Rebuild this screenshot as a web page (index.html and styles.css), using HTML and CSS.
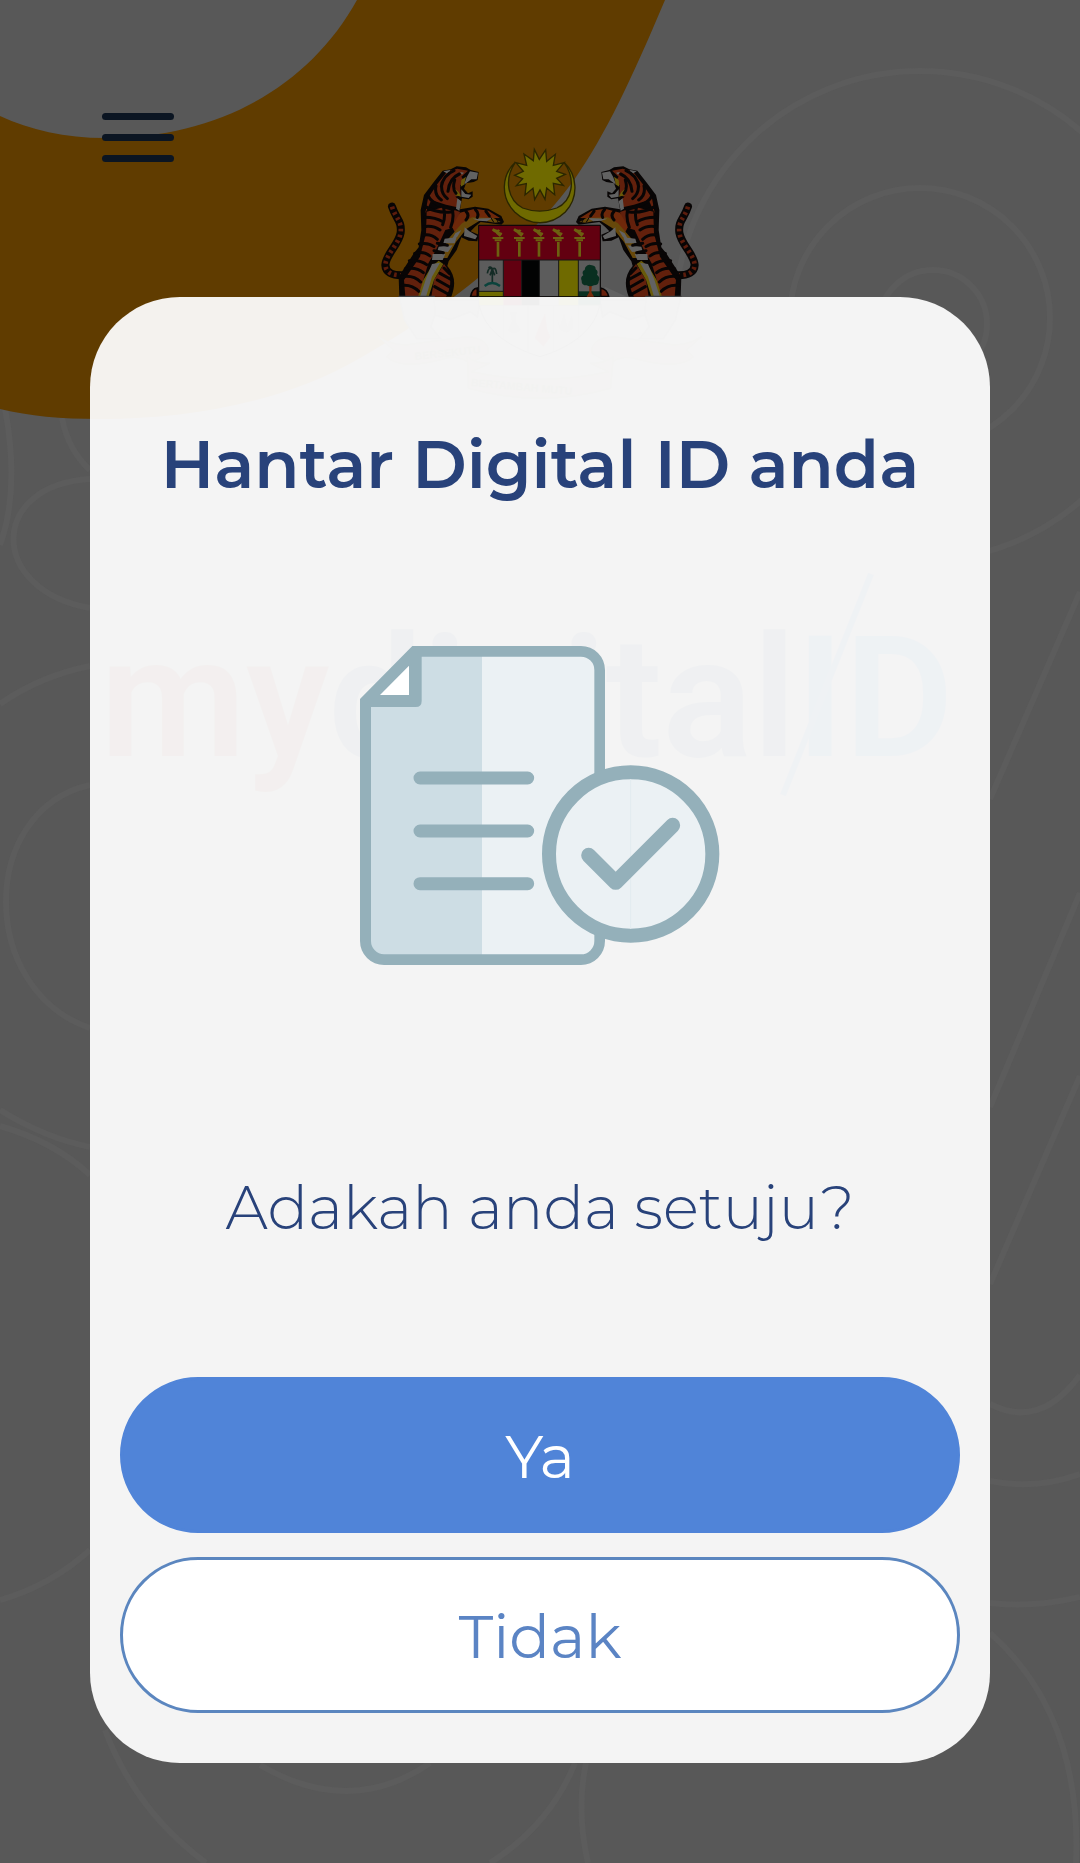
FILE: index.html
```html
<!DOCTYPE html>
<html lang="ms">
<head>
<meta charset="utf-8">
<meta name="viewport" content="width=device-width, initial-scale=1">
<title>MyDigital ID</title>
<link rel="stylesheet" href="styles.css">
</head>
<body>
<div class="scene">
  <svg class="pattern" viewBox="0 0 1080 1863" preserveAspectRatio="xMidYMin slice" aria-hidden="true">
    <g class="rings">
      <circle cx="920" cy="316" r="245"/>
      <circle cx="920" cy="318" r="130"/>
      <circle cx="933" cy="324" r="54"/>
      <path d="M990 799L1080 592M990 1107L1080 893M990 1284L1080 1076"/>
      <path d="M990 1404Q1040 1430 1080 1375M990 1481Q1035 1490 1080 1474M990 1603Q1035 1608 1080 1597M990 1633Q1082 1715 1076 1863"/>
      <path d="M5 408Q20 490 0 545M62 418Q68 450 90 470M90 479C-12 485 -12 590 90 608M0 704Q40 676 90 666M90 785C-22 810 -22 990 90 1028M0 1110Q45 1138 90 1147M0 1126Q55 1142 90 1175M0 1600Q50 1586 90 1550"/>
      <path d="M105 1730Q135 1810 206 1863M260 1765Q350 1818 430 1763M575 1763Q550 1825 490 1863M586 1763Q576 1810 588 1863"/>
    </g>
    <path class="swoosh" d="M357 0C310 85 220 138 105 138C65 138 30 130 0 116V409C30 416 60 419 100 419C190 419 285 402 360 358C430 318 520 255 574 180C606 134 632 78 665 0Z"/>
  </svg>

  <div class="page">
    <header class="topbar">
      <button class="menu" type="button" aria-label="Menu"><span></span><span></span><span></span></button>
      <svg class="crest" viewBox="0 0 1080 840" role="img" aria-label="Jata Negara">
        <defs>
          <g id="tiger">
            <path d="M96 230C108 268 126 272 122 308C116 345 78 372 76 405C77 426 95 437 128 436" fill="none" stroke="#080505" stroke-width="24" stroke-linecap="round"/>
            <path d="M96 230C108 268 126 272 122 308C116 345 78 372 76 405C77 426 95 437 128 436" fill="none" stroke="#5c1c0c" stroke-width="14" stroke-dasharray="8 10"/>
            <path d="M248 122L272 118L290 109L318 112L332 120L356 126L353 150L341 156L318 160L312 176L324 190L338 184L338 200L326 208L306 205L300 238L345 230L385 236L424 258L432 276L424 284L362 276L345 290L332 304L356 314L352 334L326 332L304 322L290 360L266 394L262 408C285 435 288 462 274 500L118 500L116 440L160 372L176 352L184 300L182 240L192 195L222 155Z" fill="#080505"/>
            <path d="M262 124L292 116L324 122L304 140L316 158L300 166L302 196L286 200L302 214L292 232L258 224L214 210L196 250L204 205L232 162Z" fill="#62200c"/>
            <path d="M200 245L255 230L300 246L290 290L256 300L228 360L205 400L190 450L185 500L136 500L132 450L180 380L198 310Z" fill="#62200c"/>
            <path d="M300 248L345 236L385 242L420 264L350 266L312 290L284 306L276 290Z" fill="#6e280a"/>
            <path d="M252 402C276 430 276 470 258 500L214 500L222 450Z" fill="#62200c"/>
            <path d="M306 280L336 262L400 264L422 276L404 278L362 270L320 296L288 336L262 384L240 384L262 330Z" fill="#67480a"/>
            <path d="M214 410L236 392L250 402L222 450L206 500L174 500L190 450Z" fill="#695a0a"/>
            <path d="M338 266L398 264L380 274L356 272ZM314 292L328 304L352 318L346 328L312 318ZM286 310L304 300L292 320L276 328ZM254 326L290 322L284 340L250 340ZM236 350L278 346L264 366L232 364ZM218 372L256 372L248 390L216 390ZM216 402L240 398L216 440L198 500L180 500L198 446Z" fill="#626262"/>
            <path d="M250 124L270 120L268 134ZM330 124L354 128L350 148L334 148L312 164L320 142ZM300 126L312 128L306 134ZM304 178L316 192L334 194L326 204L304 200ZM292 205L304 214L298 242L288 236Z" fill="#626262"/>
            <path d="M278 170L296 186L304 200L286 196ZM304 150L318 140L312 164L302 170Z" fill="#695a0a"/>
            <path d="M282 122Q250 135 244 170M298 132Q268 145 264 184M228 168Q222 195 244 210M246 158Q240 188 262 206M284 150Q276 176 288 190M206 200Q220 226 280 238M196 230Q230 250 272 246M194 262Q226 262 250 276M192 290Q220 286 240 300M188 316Q212 310 232 328M178 342Q204 336 222 350M164 370Q192 362 210 378M148 392Q180 388 200 404M136 416Q170 410 190 428M126 440Q160 434 182 456M124 466Q156 462 176 484M250 230Q258 260 248 284M276 236Q284 262 272 292M318 244Q330 256 318 270M346 238Q358 250 352 262M378 244L388 258M252 414L268 430M240 430L276 450M232 450L274 474M224 470L264 492M232 340L262 346M222 362L250 368" fill="none" stroke="#080505" stroke-width="9" stroke-linecap="round"/>
            <path d="M392 262L402 278M408 264L416 280" stroke="#080505" stroke-width="3"/>
            <path d="M118 500L134 570L170 625H240L212 590L226 550L222 500ZM222 510L226 555L272 568L330 545L352 560L360 510Z" fill="#555" stroke="#3e3e3e" stroke-width="5"/>
          </g>
          <g id="torch" fill="none" stroke="#6c6010">
            <path d="M0 336V380" stroke-width="8"/>
            <path d="M-16 324H16M-10 331H10" stroke-width="6"/>
            <path d="M8 318Q0 312 -4 308M12 312Q-8 306 -16 298Q-2 306 4 300" stroke-width="7"/>
          </g>
        </defs>
        <path d="M330 500L352 470L362 500ZM720 500L735 470L800 500Z" fill="#626262"/>
        <use href="#tiger"/>
        <use href="#tiger" transform="matrix(-1 0 0 1 1080 0)"/>
        <path d="M332 500Q336 476 352 474V500ZM722 474Q742 478 746 500H722Z" fill="#68200c" stroke="#080505" stroke-width="5"/>
        <path d="M466 97C425 135 420 200 464 246C510 290 572 288 616 246C658 200 652 135 612 97C650 150 636 215 590 234C558 246 520 246 488 234C444 210 430 150 466 97Z" fill="#6f6a00" stroke="#2b2600" stroke-width="4"/>
        <path class="star" d="M523 58L538 88L557 60L560 94L586 73L580 106L612 98L590 124L616 133L590 145L610 166L580 160L584 194L560 174L555 208L540 180L524 209L519 175L495 195L499 161L469 167L488 146L464 136L490 124L468 98L500 106L492 72L520 92Z"/>
        <path d="M356 286H721V500C721 590 640 650 540 680C440 650 356 590 356 500Z" fill="#5c5c5c" stroke="#333" stroke-width="3"/>
        <path d="M356 286H721V390H356Z" fill="#620010"/>
        <path d="M430 390H485V526H430Z" fill="#620010"/>
        <path d="M485 390H538V526H485Z" fill="#020303"/>
        <path d="M596 390H655V526H596Z" fill="#6f6a00"/>
        <path d="M356 484H430V526H358Z" fill="#6f6a00"/>
        <path d="M655 484H721V526H655Z" fill="#092f20"/>
        <path d="M356 390H721M430 390V500M485 390V500M538 390V500M596 390V500M655 390V500M356 484H430" fill="none" stroke="#171717" stroke-width="3"/>
        <path d="M356 526H721M504 526V668M580 526V668M430 526V630M655 526V630" fill="none" stroke="#484848" stroke-width="3"/>
        <path d="M356 286H721V500H356Z" fill="none" stroke="#080505" stroke-width="3"/>
        <use href="#torch" x="414"/><use href="#torch" x="478"/><use href="#torch" x="537"/><use href="#torch" x="595"/><use href="#torch" x="659"/>
        <g fill="none" stroke="#142b25" stroke-width="5">
          <path d="M397 418V462M397 418Q386 408 382 430M397 416Q390 408 386 414M397 418Q408 408 410 432M396 420L390 436M398 420L404 436"/>
          <path d="M374 468Q396 450 420 468" stroke="#0b433c" stroke-width="7"/>
        </g>
        <path d="M687 458H696L694 486L702 500H680L688 486Z" fill="#7a2b0a"/>
        <path d="M676 412Q682 402 692 405Q708 406 707 418Q716 424 711 434Q722 442 716 454Q716 466 702 466Q690 472 680 466Q664 466 665 452Q660 442 670 436Q664 424 674 420Z" fill="#092f20"/>
        <g fill="#4c4848">
          <path d="M450 545L470 545L466 575L482 600Q460 620 444 600L456 575Z"/>
          <path d="M590 560L600 590L612 550L622 590L636 555L640 595L620 608L600 600Z"/>
          <path d="M555 550L562 600L572 620L550 650L524 625L535 595Z" fill="#583838"/>
        </g>
        <g class="ribbon">
          <path d="M55 620Q110 655 170 640L320 620Q390 625 385 670L330 700Q290 670 240 690Q120 720 80 680L100 660Z"/>
          <path d="M1025 620Q970 655 910 640L760 620Q690 625 695 670L750 700Q790 670 840 690Q960 720 1000 680L980 660Z"/>
          <path d="M322 680Q345 700 390 700L335 725Q540 770 745 725L690 700Q735 700 760 680L752 775Q540 835 325 775Z"/>
        </g>
        <text class="motto" x="165" y="690" transform="rotate(-6 165 690)">BERSEKUTU</text>
        <text class="motto" x="332" y="768" transform="rotate(5 332 768)">BERTAMBAH MUTU</text>
      </svg>
    </header>
    <svg class="wordmark" viewBox="0 0 900 240" role="img" aria-label="mydigitalID">
      <text x="10" y="196"><tspan class="red">my</tspan><tspan class="navy">digital</tspan><tspan class="blue">ID</tspan></text>
      <path d="M781 14L693 235" stroke="#1c3a58" stroke-width="6"/>
    </svg>
  </div>
</div>

<main class="overlay">
  <section class="dialog" role="dialog" aria-modal="true" aria-labelledby="dialog-title" aria-describedby="dialog-text">
    <h1 class="title" id="dialog-title">Hantar Digital ID anda</h1>
    <svg class="document" viewBox="60 78 1080 960" aria-hidden="true">
      <path d="M77 245L223 94H723A55 55 0 0 1 778 149V964A55 55 0 0 1 723 1019H132A55 55 0 0 1 77 964Z" fill="#ebf1f4"/>
      <path d="M77 245L223 94H426V1019H132A55 55 0 0 1 77 964Z" fill="#cddde4"/>
      <path d="M77 245L223 94V243Z" fill="#fff"/>
      <path d="M60 237L217 78H723A72 72 0 0 1 795 150V963A72 72 0 0 1 723 1035H132A72 72 0 0 1 60 963ZM93 261V963A40 40 0 0 0 132 1003H723A40 40 0 0 0 763 963V150A40 40 0 0 0 723 110H245V243Q245 261 227 261ZM120 225H207V137Z" fill="#94b0ba" fill-rule="evenodd"/>
      <path d="M240 474H563M240 633H563M240 791H563" stroke="#94b0ba" stroke-width="39" stroke-linecap="round"/>
      <circle cx="872" cy="702" r="245" fill="#ebf1f4" stroke="#94b0ba" stroke-width="42"/>
      <path d="M872 478V926" stroke="#e2ebef" stroke-width="3"/>
      <path d="M746 706L827 787L998 616" fill="none" stroke="#94b0ba" stroke-width="45" stroke-linecap="round" stroke-linejoin="round"/>
    </svg>
    <p class="question" id="dialog-text">Adakah anda setuju?</p>
    <div class="actions">
      <button class="btn primary" type="button">Ya</button>
      <button class="btn secondary" type="button">Tidak</button>
    </div>
  </section>
</main>
</body>
</html>
```
FILE: styles.css
```css
* { box-sizing: border-box; }

body {
  display: grid;
  grid-template-columns: 100%;
  min-height: 100vh;
  margin: 0;
  background: #585858;
  font-family: Montserrat, Inter, "Open Sans", sans-serif;
}

/* The scene and the overlay share one grid cell */
.scene,
.overlay { grid-area: 1 / 1; }

.scene {
  position: relative;
  overflow: hidden;
}

.pattern {
  position: absolute;
  inset: 0;
  width: 100%;
  height: 100%;
}

.rings {
  fill: none;
  stroke: #5c5c5c;
  stroke-width: 6;
}

.swoosh { fill: #603c00; }

.page { position: relative; }

.topbar {
  display: grid;
  grid-template-columns: 1fr auto 1fr;
  align-items: start;
  padding: 113px 102px 0;
}

.menu {
  display: grid;
  gap: 14px;
  width: 72px;
  padding: 0;
  border: 0;
  background: none;
}

.menu span {
  height: 7px;
  border-radius: 4px;
  background: #0b1522;
}

.crest {
  width: 360px;
  height: 280px;
  margin-top: 17px;
}

.star {
  fill: #6f6a00;
  stroke: #2b2600;
  stroke-width: 4;
}

.ribbon {
  fill: #575548;
  stroke: #4c4a3a;
  stroke-width: 3;
}

.motto {
  fill: #3c3a2c;
  font: 700 32px "Liberation Sans", sans-serif;
}

.wordmark {
  display: block;
  width: calc(100% - 180px);
  margin: 150px auto 0;
  font-family: Roboto, "Open Sans", sans-serif;
  font-size: 168px;
  font-weight: 600;
}

.red { fill: #4a1c12; }
.navy { fill: #10243c; }
.blue { fill: #0c3c60; }

.overlay {
  position: relative;
  padding: 297px 90px 100px;
}

.dialog {
  display: flex;
  flex-direction: column;
  align-items: center;
  padding: 128px 30px 50px;
  border-radius: 90px;
  background: rgba(255, 255, 255, 0.935);
  color: #28427a;
  text-align: center;
}

.title {
  margin: 0;
  font-size: 66px;
  font-weight: 600;
  line-height: 80px;
}

.document {
  width: 360px;
  height: 320px;
  margin-top: 141px;
}

.question {
  margin: 202px 0 0;
  font-size: 60px;
  font-weight: 300;
  line-height: 80px;
}

.actions {
  display: grid;
  gap: 24px;
  width: 100%;
  margin-top: 129px;
}

.btn {
  height: 156px;
  padding: 2px 0 0;
  border: 3px solid #5084d8;
  border-radius: 78px;
  font: 400 60px Montserrat, Inter, "Open Sans", sans-serif;
}

.primary {
  background: #5084d8;
  color: #fff;
}

.secondary {
  border-color: #5b86bf;
  background: #fff;
  color: #5b84c4;
}
```
